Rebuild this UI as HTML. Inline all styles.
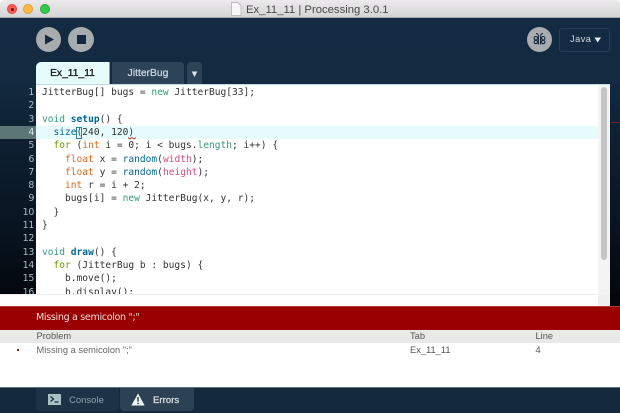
<!DOCTYPE html>
<html><head><meta charset="utf-8">
<style>
html,body{margin:0;padding:0;width:620px;height:413px;overflow:hidden;background:#fff}
*{box-sizing:border-box}
div,span{position:absolute}
.s{font-family:"DejaVu Sans","Liberation Sans",sans-serif}
#code div{left:42px;white-space:pre;font:9.57px/13px "DejaVu Sans Mono","Liberation Mono",monospace;color:#333;height:13px}
#code span{position:static}
#nums div{left:0;width:34px;text-align:right;font:9.4px/13px "DejaVu Sans","Liberation Sans",sans-serif;color:#a8bcc0;height:13px;letter-spacing:-.3px}
.k{color:#33997e}.b{color:#006699;font-weight:bold}.g{color:#669900}.o{color:#e2661a}.f{color:#006699}.p{color:#d94a7a}.t{color:#33997e}
.tb{font:9.3px/13px "Liberation Sans",sans-serif;color:#555;white-space:pre}
</style></head><body>
<div style="left:0;top:0;width:620px;height:413px;overflow:hidden">
<!-- titlebar -->
<div style="left:0;top:0;width:620px;height:18px;background:linear-gradient(#eceaec,#d6d5d6);border-bottom:1px solid #a8a8a8;border-radius:4px 4px 0 0"></div>
<div style="left:7px;top:4px;width:10px;height:10px;border-radius:50%;background:#fc5b57;border:1px solid #e0443e"></div>
<div style="left:10.5px;top:7.5px;width:3px;height:3px;border-radius:50%;background:#6e0e0a"></div>
<div style="left:23px;top:4px;width:10px;height:10px;border-radius:50%;background:#fdbc40;border:1px solid #dea034"></div>
<div style="left:40px;top:4px;width:10px;height:10px;border-radius:50%;background:#34c84a;border:1px solid #2aa73b"></div>
<svg style="position:absolute;left:230px;top:2px" width="12" height="14"><path d="M1.5 .5H8L11 3.5V13.5H1.5Z" fill="#f6f6f6" stroke="#bdbdbd"/></svg>
<div style="left:246px;top:2px;font:11.3px/16px 'Liberation Sans',sans-serif;color:#4a4a4a;white-space:pre">Ex_11_11 | Processing 3.0.1</div>
<!-- main bg -->
<div style="left:0;top:18px;width:620px;height:288px;background:linear-gradient(#132b43 0,#132a40 60px,#0d1f30 130px,#081420 210px,#02060a 288px)"></div>
<!-- toolbar -->
<div style="left:36px;top:27px;width:25px;height:25px;border-radius:50%;background:#a9acae"></div>
<svg style="position:absolute;left:36px;top:27px" width="25" height="25"><path d="M9 7.5L18 12.5L9 17.5Z" fill="#14293f"/></svg>
<div style="left:68px;top:27px;width:26px;height:25px;border-radius:50%;background:#a9acae"></div>
<div style="left:77px;top:35px;width:9px;height:9px;background:#14293f"></div>
<div style="left:527px;top:27px;width:25px;height:25px;border-radius:50%;background:#a9acae"></div>
<svg style="position:absolute;left:527px;top:27px" width="25" height="25" fill="none" stroke="#14293f" stroke-width="1.1"><circle cx="8.8" cy="11.2" r="1.7"/><circle cx="8.8" cy="15" r="1.7"/><circle cx="16.2" cy="11.2" r="1.7"/><circle cx="16.2" cy="15" r="1.7"/><path d="M11.4 8V17.5M13.6 8V17.5M11.4 8.5C11 7 10 6.5 9 6.5M13.6 8.5C14 7 15 6.5 16 6.5"/></svg>
<div style="left:559px;top:28px;width:51px;height:24px;border:1px solid #24405a;border-radius:3px"></div>
<div style="left:570px;top:32px;font:9.2px/15px 'Liberation Sans',sans-serif;color:#d5dde2;letter-spacing:.5px">Java</div>
<svg style="position:absolute;left:594px;top:37px" width="8" height="6"><path d="M.5 .5H7L3.7 5.5Z" fill="#e8edf0"/></svg>
<!-- tabs -->
<div style="left:36px;top:62px;width:74px;height:23px;background:#e6fbfb;border-radius:5px 0 0 0;border-right:1px solid #d8942c"></div>
<div style="left:36px;top:65.5px;width:73px;text-align:center;font:10.3px/15px 'Liberation Sans',sans-serif;color:#222;-webkit-text-stroke:.35px #222">Ex_11_11</div>
<div style="left:112px;top:62px;width:72px;height:23px;background:#2c4358;border-radius:0 4px 0 0"></div>
<div style="left:112px;top:65.5px;width:72px;text-align:center;font:10.3px/15px 'Liberation Sans',sans-serif;color:#c8d2d8;-webkit-text-stroke:.3px #c8d2d8">JitterBug</div>
<div style="left:187px;top:62px;width:15px;height:23px;background:#2c4358;border-radius:4px 4px 0 0"></div>
<svg style="position:absolute;left:191px;top:71px" width="8" height="7"><path d="M.7 .5H6.3L3.5 6Z" fill="#dfe6ea"/></svg>
<!-- editor -->
<div style="left:36px;top:84px;width:574px;height:210px;background:#fff;border-top:1px solid #b8dfe2;overflow:hidden"></div>
<div style="left:0;top:126px;width:36px;height:13px;background:#5c7677"></div>
<div style="left:36px;top:126px;width:562px;height:13px;background:#e6fbfb"></div>
<div style="left:598px;top:85px;width:12px;height:209px;background:#f4f4f4"></div>
<div style="left:601px;top:87px;width:6px;height:173px;background:#c5c5c5;border-radius:3px"></div>
<div style="top:122px;height:1px;background:#7a1a20;left:611px;width:9px"></div>
<div id="nums" style="left:0;top:0;width:36px;height:294px;overflow:hidden">
<div style="top:86px">1</div><div style="top:99.3px">2</div><div style="top:112.6px">3</div><div style="top:126px;color:#dbe4e4">4</div><div style="top:139.2px">5</div><div style="top:152.5px">6</div><div style="top:165.8px">7</div><div style="top:179px">8</div><div style="top:192.4px">9</div><div style="top:205.7px">10</div><div style="top:219px">11</div><div style="top:232.3px">12</div><div style="top:245.6px">13</div><div style="top:258.9px">14</div><div style="top:272.2px">15</div><div style="top:285.5px">16</div>
</div>
<div id="code" style="left:0;top:0;width:598px;height:294px;overflow:hidden">
<div style="top:86px">JitterBug[] bugs = <span class="k">new</span> JitterBug[33];</div>
<div style="top:112.6px"><span class="k">void</span> <span class="b">setup</span>() {</div>
<div style="top:126px">  <span class="f">size</span>(240, 120)</div>
<div style="top:139.2px">  <span class="g">for</span> (<span class="o">int</span> i = 0; i &lt; bugs.<span class="t">length</span>; i++) {</div>
<div style="top:152.5px">    <span class="o">float</span> x = <span class="f">random</span>(<span class="p">width</span>);</div>
<div style="top:165.8px">    <span class="o">float</span> y = <span class="f">random</span>(<span class="p">height</span>);</div>
<div style="top:179px">    <span class="o">int</span> r = i + 2;</div>
<div style="top:192.4px">    bugs[i] = <span class="k">new</span> JitterBug(x, y, r);</div>
<div style="top:205.7px">  }</div>
<div style="top:219px">}</div>
<div style="top:245.6px"><span class="k">void</span> <span class="b">draw</span>() {</div>
<div style="top:258.9px">  <span class="g">for</span> (JitterBug b : bugs) {</div>
<div style="top:272.2px">    b.move();</div>
<div style="top:285.5px">    b.display();</div>
</div>
<!-- caret bracket -->
<div style="left:76px;top:127px;width:6px;height:12px;border:1px solid #2c7fb0;background:transparent"></div>
<svg style="position:absolute;left:128px;top:136px" width="8" height="4"><path d="M0 1.5L2 3L4 1.5L6 3L8 1.5" fill="none" stroke="#c0392b" stroke-width=".9"/></svg>
<!-- hscroll band -->
<div style="left:0;top:294px;width:610px;height:12px;background:#fff;border-top:1px solid #ececec"></div>
<div style="left:598px;top:294px;width:12px;height:12px;background:#f0f0f0"></div>
<div style="left:610px;top:294px;width:10px;height:12px;background:#02060a"></div>
<!-- error bar -->
<div style="left:0;top:306px;width:620px;height:24px;background:#9b0000;border-top:1px solid #b53a3a"></div>
<div style="left:36px;top:311px;font:9.6px/14px 'DejaVu Sans','Liberation Sans',sans-serif;color:#f0d8d8;letter-spacing:-.35px;white-space:pre">Missing a semicolon ";"</div>
<!-- table -->
<div style="left:0;top:330px;width:620px;height:13px;background:#e9e9e9"></div>
<div class="tb" style="left:36.5px;top:330px">Problem</div>
<div class="tb" style="left:410px;top:330px">Tab</div>
<div class="tb" style="left:535.5px;top:330px">Line</div>
<div style="left:0;top:343px;width:620px;height:44px;background:#fff"></div>
<div style="left:17px;top:349px;width:2px;height:2px;background:#a01818"></div>
<div class="tb" style="left:36.5px;top:343.5px;color:#666">Missing a semicolon ";"</div>
<div class="tb" style="left:410px;top:343.5px;color:#555">Ex_11_11</div>
<div class="tb" style="left:535.5px;top:343.5px;color:#555">4</div>
<!-- footer -->
<div style="left:0;top:387px;width:620px;height:26px;background:#15293c;border-top:1px solid #5d7080"></div>
<div style="left:36px;top:388px;width:83px;height:23px;background:#1d3345;border-radius:0 0 4px 4px"></div>
<div style="left:120px;top:388px;width:74px;height:23px;background:#2c4254;border-radius:0 0 4px 4px"></div>
<svg style="position:absolute;left:48px;top:394px" width="13" height="11"><rect width="13" height="11" fill="#a9c0c2"/><path d="M2.5 2.5L5.5 5L2.5 7.5" fill="none" stroke="#15293c" stroke-width="1.2"/><path d="M6.5 8H10.5" stroke="#15293c" stroke-width="1.2"/></svg>
<div style="left:69px;top:392.5px;font:9.5px/15px 'Liberation Sans',sans-serif;color:#8fa2ad">Console</div>
<svg style="position:absolute;left:131px;top:393px" width="14" height="13"><path d="M7 .5L13.7 12.5H.3Z" fill="#eef5f5"/><path d="M7 4V8.6M7 9.8V11.2" stroke="#2c4254" stroke-width="1.5"/></svg>
<div style="left:153px;top:392.5px;font:9.6px/15px 'Liberation Sans',sans-serif;color:#d4dde2;-webkit-text-stroke:.3px #d4dde2">Errors</div>
</div>
</body></html>
